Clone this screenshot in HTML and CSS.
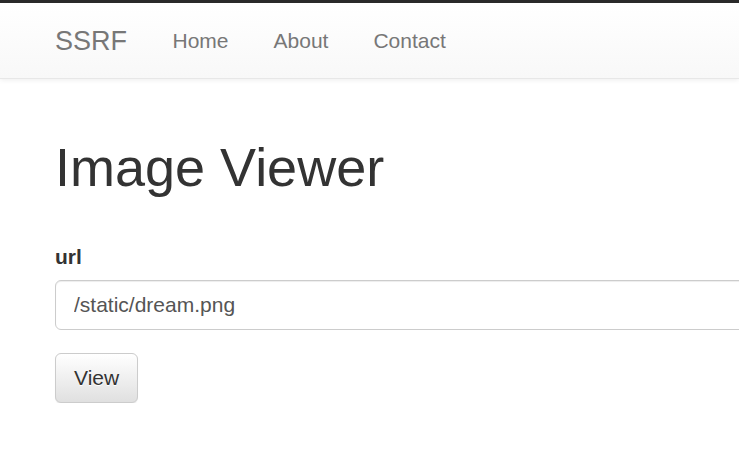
FILE: index.html
```
<!doctype html>
<html lang="en">
  <head>
    <meta charset="UTF-8" />
    <meta name="viewport" content="width=device-width, initial-scale=1.0" />
    <title>SSRF</title>
    <link rel="stylesheet" href="styles.css">
  </head>

  <body>
    <div class="topline"></div>

    <nav class="navbar">
      <div class="container navbar-inner">
        <a class="navbar-brand" href="#">SSRF</a>
        <ul class="nav">
          <li><a href="#">Home</a></li>
          <li><a href="#">About</a></li>
          <li><a href="#">Contact</a></li>
        </ul>
      </div>
    </nav>

    <div class="container main">
      <h1>Image Viewer</h1>

      <form class="viewer-form" action="#">
        <div class="form-group">
          <label for="url">url</label>
          <input id="url" class="form-control" type="text" name="url" value="/static/dream.png">
        </div>
        <button class="btn" type="submit">View</button>
      </form>
    </div>
  </body>
</html>
```

FILE: styles.css
```
html {
  overflow-x: hidden;
}

body {
  margin: 0;
  font-family: "Liberation Sans", Arial, sans-serif;
  font-size: 21px;
  line-height: 1.42857;
  color: #333;
  background-color: #fff;
}

.topline {
  height: 3px;
  background-color: #2b2b2b;
}

.container {
  padding-left: 55px;
}

/* navbar, bootstrap-theme look */
.navbar {
  min-height: 75px;
  background-image: linear-gradient(to bottom, #fff 0, #f8f8f8 100%);
  border-bottom: 1px solid #e7e7e7;
  box-shadow: inset 0 1px 0 rgba(255, 255, 255, 0.15), 0 1px 5px rgba(0, 0, 0, 0.075);
}

.navbar-inner {
  display: flex;
  align-items: flex-start;
}

.navbar-brand {
  padding: 23px 23px 22px 0;
  font-size: 27px;
  line-height: 30px;
  color: #777;
  text-decoration: none;
}

.nav {
  display: flex;
  margin: 0;
  padding: 0;
  list-style: none;
}

.nav a {
  display: block;
  padding: 23px 22.5px 22px;
  line-height: 30px;
  color: #777;
  text-decoration: none;
}

.main {
  padding-top: 59px;
}

h1 {
  margin: 0 0 15px;
  font-size: 54px;
  font-weight: 500;
  line-height: 1.1;
}

.viewer-form {
  padding-top: 30px;
}

.form-group {
  margin-bottom: 23px;
}

label {
  display: inline-block;
  margin-bottom: 8px;
  font-weight: bold;
}

.form-control {
  display: block;
  box-sizing: border-box;
  width: 720px;
  height: 50px;
  padding: 9px 18px;
  font-family: inherit;
  font-size: 21px;
  line-height: 1.42857;
  color: #555;
  background-color: #fff;
  border: 1px solid #ccc;
  border-radius: 6px;
  box-shadow: inset 0 1px 1px rgba(0, 0, 0, 0.075);
}

.btn {
  display: inline-block;
  height: 50px;
  padding: 9px 18px;
  font-family: inherit;
  font-size: 21px;
  line-height: 1.42857;
  color: #333;
  text-shadow: 0 1px 0 #fff;
  background-image: linear-gradient(to bottom, #fff 0, #e0e0e0 100%);
  border: 1px solid #ccc;
  border-radius: 6px;
  box-shadow: inset 0 1px 0 rgba(255, 255, 255, 0.15), 0 1px 1px rgba(0, 0, 0, 0.075);
  cursor: pointer;
}
```
